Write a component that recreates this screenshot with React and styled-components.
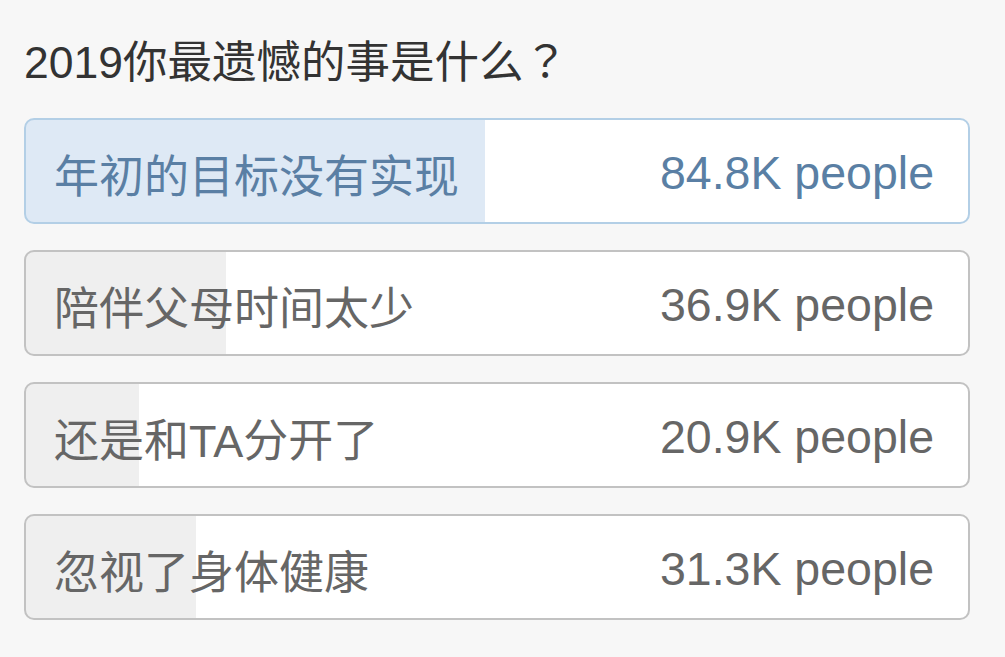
import React from "react";
import styled, { createGlobalStyle } from "styled-components";

const Global = createGlobalStyle`
  html, body {
    margin: 0;
    padding: 0;
    background: #f7f7f7;
  }
  body {
    font-family: "Liberation Sans", "Noto Sans CJK SC", sans-serif;
  }
`;

const Page = styled.div`
  width: 1005px;
  min-height: 657px;
  box-sizing: border-box;
  padding: 37px 35px 0 24px;
  background: #f7f7f7;
`;

const Title = styled.h1`
  margin: 0 0 31px;
  height: 50px;
  overflow: visible;
  font-size: 44.5px;
  line-height: 50px;
  font-weight: 400;
  color: #333333;
  white-space: nowrap;
`;

const Punct = styled.span`
  font-family: "Noto Sans CJK TC", sans-serif;
  line-height: 1;
`;

const List = styled.div`
  display: flex;
  flex-direction: column;
  gap: 26px;
`;

const Card = styled.div`
  height: 106px;
  box-sizing: border-box;
  display: flex;
  align-items: center;
  justify-content: space-between;
  padding: 4px 34px 0 28px;
  border: 2px solid ${(p) => (p.$active ? "#b3cfe6" : "#c2c2c2")};
  border-radius: 10px;
  background: linear-gradient(
    to right,
    ${(p) => (p.$active ? "#dee9f5" : "#efefef")} 0,
    ${(p) => (p.$active ? "#dee9f5" : "#efefef")} var(--fill),
    #ffffff var(--fill),
    #ffffff 100%
  );
  color: ${(p) => (p.$active ? "#5a7fa4" : "#666666")};
`;

const Label = styled.span`
  font-size: 45px;
  white-space: nowrap;
`;

const Count = styled.span`
  font-size: 46.5px;
  white-space: nowrap;
`;

const options = [
  { label: "年初的目标没有实现", count: 84.8, active: true },
  { label: "陪伴父母时间太少", count: 36.9 },
  { label: "还是和TA分开了", count: 20.9 },
  { label: "忽视了身体健康", count: 31.3 },
];

export default function App() {
  const total = options.reduce((s, o) => s + o.count, 0);
  return (
    <>
      <Global />
      <Page>
        <Title>
          2019你最遗憾的事是什么<Punct>？</Punct>
        </Title>
        <List>
          {options.map((o) => (
            <Card
              key={o.label}
              $active={o.active}
              style={{ "--fill": `${((o.count / total) * 100).toFixed(2)}%` }}
            >
              <Label>{o.label}</Label>
              <Count>{o.count}K people</Count>
            </Card>
          ))}
        </List>
      </Page>
    </>
  );
}
